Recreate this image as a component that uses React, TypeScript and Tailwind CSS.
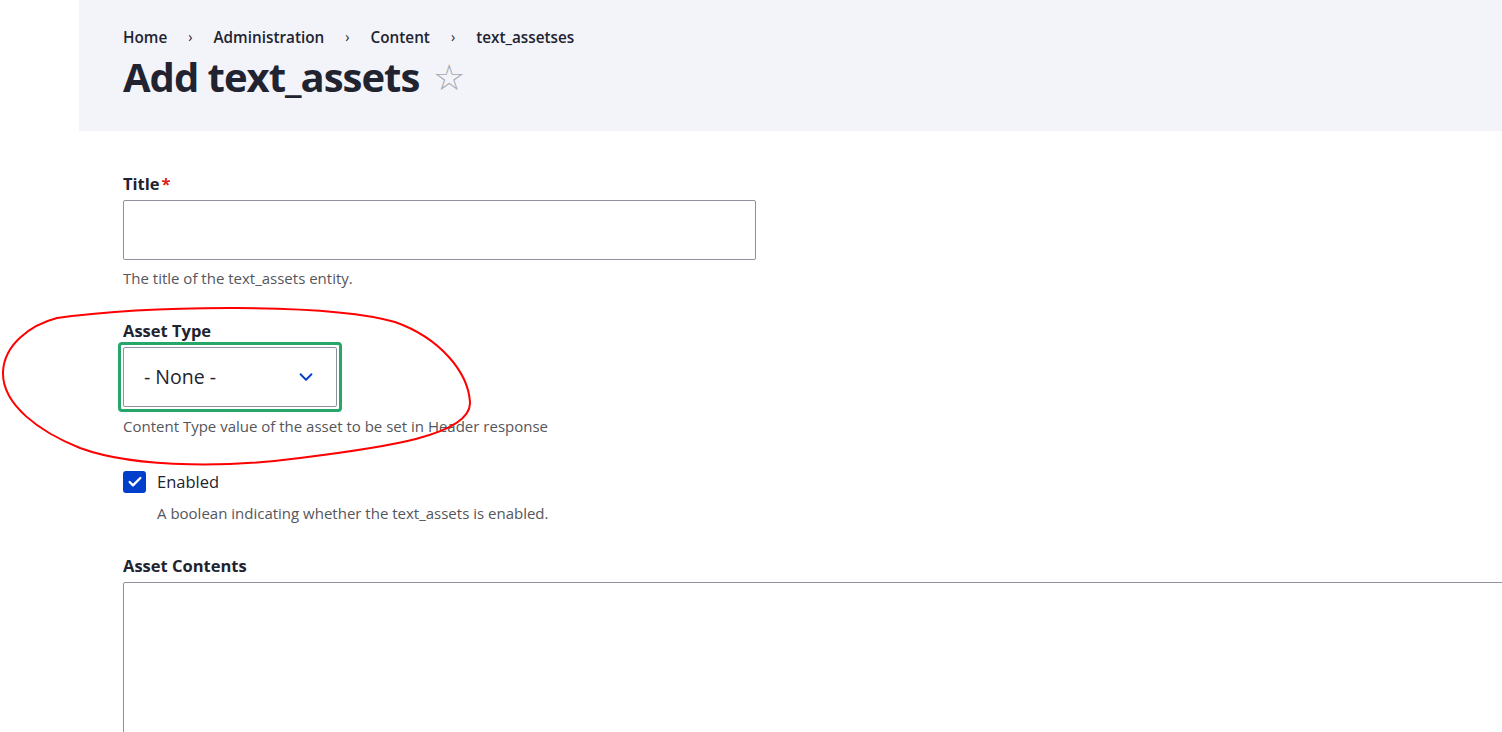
import { Check, ChevronDown } from "lucide-react";

const font = { fontFamily: '"Open Sans", "Noto Sans", sans-serif' };

const Crumbs = () => {
  const items = ["Home", "Administration", "Content", "text_assetses"];
  return (
    <ol className="flex items-center text-[15.3px] font-semibold text-[#222330] leading-5">
      {items.map((item, i) => (
        <li key={item} className="flex items-center">
          {i > 0 && <span className="px-[21px] text-[14px] font-normal">›</span>}
          <span>{item}</span>
        </li>
      ))}
    </ol>
  );
};

export default function App() {
  return (
    <div style={font} className="relative w-[1502px] h-[732px] overflow-hidden bg-white text-[#222330]">
      <div className="flex">
        <div className="w-[79px] shrink-0" />
        <div className="flex-1 flex flex-col">
          <header className="bg-[#f3f4f9] h-[131px] pl-[44px] pt-[27px]">
            <Crumbs />
            <h1 className="mt-[6px] flex items-center text-[40px] font-bold leading-[48px] tracking-[-1px]">
              Add text_assets
              <span className="ml-[14px] text-[36px] font-normal text-[#a6a8b0]">☆</span>
            </h1>
          </header>

          <form className="pl-[44px] pt-[43px] flex flex-col">
            <label className="text-[16.5px] font-bold leading-5">
              Title<span className="text-[#d72222] ml-[2px]">*</span>
            </label>
            <input className="mt-[6px] w-[633px] h-[60px] border border-[#8e929c] rounded-[2px]" />
            <p className="mt-[8px] text-[15px] text-[#55565b] leading-5">The title of the text_assets entity.</p>

            <label className="mt-[33px] text-[16.5px] font-bold leading-5">Asset Type</label>
            <div className="mt-[1px] -ml-[5px] w-[224px] h-[70px] border-[3px] border-[#26a769] rounded-[4px] p-[2px]">
              <div className="h-full border border-[#8e929c] rounded-[2px] flex items-center justify-between pl-[20px] pr-[19px]">
                <span className="text-[19.5px] leading-6">- None -</span>
                <ChevronDown className="w-[22px] h-[22px] text-[#003ecc]" strokeWidth={2} />
              </div>
            </div>
            <p className="mt-[4px] text-[15px] text-[#55565b] leading-5">
              Content Type value of the asset to be set in Header response
            </p>

            <div className="mt-[35px] flex items-center">
              <span className="w-[23px] h-[22px] rounded-[3px] bg-[#003ecc] flex items-center justify-center">
                <Check className="w-[16px] h-[16px] text-white" strokeWidth={3.5} />
              </span>
              <span className="ml-[11px] text-[16.5px] leading-5">Enabled</span>
            </div>
            <p className="mt-[10px] ml-[34px] text-[15px] text-[#55565b] leading-5">
              A boolean indicating whether the text_assets is enabled.
            </p>

            <label className="mt-[33px] text-[16.5px] font-bold leading-5">Asset Contents</label>
            <textarea className="mt-[6px] w-[1420px] h-[220px] border border-[#8e929c] rounded-[2px]" />
          </form>
        </div>
      </div>

      <svg className="absolute left-0 top-0 pointer-events-none" width="1502" height="732">
        <path
          d="M 57 318 C 150 305, 330 303, 395 322 C 440 338, 468 372, 470 402 C 472 436, 380 448, 300 458 C 240 466, 140 470, 80 448 C 40 432, 2 405, 3 372 C 4 345, 30 325, 57 318 Z"
          fill="none"
          stroke="#ff0000"
          strokeWidth="2"
        />
      </svg>
    </div>
  );
}
